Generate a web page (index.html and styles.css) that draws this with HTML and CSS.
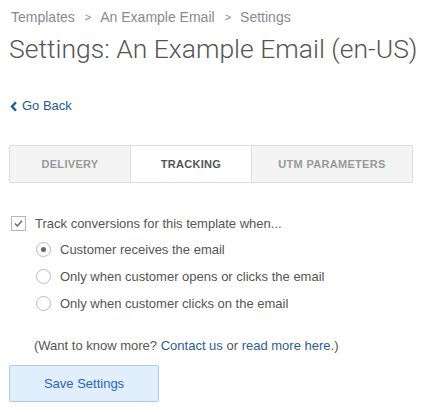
FILE: index.html
```html
<!DOCTYPE html>
<html>
<head>
<meta charset="utf-8">
<link rel="stylesheet" href="styles.css">
</head>
<body>
<div class="page">
  <nav class="crumbs">
    <span>Templates</span><span class="sep">&gt;</span><span>An Example Email</span><span class="sep">&gt;</span><span>Settings</span>
  </nav>
  <h1 class="title">Settings: An Example Email (en-US)</h1>
  <a class="back" href="#"><svg class="chev" width="8" height="11" viewBox="0 0 8 11"><path d="M6 1.2 L2 5.5 L6 9.8" fill="none" stroke="#1f5b8c" stroke-width="2.4"/></svg>Go Back</a>
  <div class="tabs">
    <div class="tab t1">DELIVERY</div>
    <div class="tab t2 active">TRACKING</div>
    <div class="tab t3">UTM PARAMETERS</div>
  </div>
  <div class="check-row">
    <span class="checkbox"><svg width="11" height="11" viewBox="0 0 11 11"><path d="M2 5.6 L4.4 8 L9 2.8" fill="none" stroke="#666" stroke-width="1.4"/></svg></span>
    <span>Track conversions for this template when...</span>
  </div>
  <div class="radios">
    <div class="radio-row"><span class="radio on"></span><span>Customer receives the email</span></div>
    <div class="radio-row"><span class="radio"></span><span>Only when customer opens or clicks the email</span></div>
    <div class="radio-row"><span class="radio"></span><span>Only when customer clicks on the email</span></div>
  </div>
  <p class="info">(Want to know more? <a href="#">Contact us</a> or <a href="#">read more here</a>.)</p>
  <button class="save">Save Settings</button>
</div>
</body>
</html>
```
FILE: styles.css
```css
html, body { margin: 0; padding: 0; background: #fff; }
body { font-family: "Liberation Sans", Arial, sans-serif; color: #555; }
.page { padding: 9px 9px 0 9px; }
.crumbs { font-size: 14px; color: #8a8a8a; line-height: 16px; padding-left: 2px; display: flex; }
.crumbs .sep { font-size: 11px; margin: 0 9px 0 10px; }
.title { font-family: Roboto, "Liberation Sans", sans-serif; font-weight: 300; font-size: 26.5px; color: #555; margin: 8px 0 0 0; line-height: 32px; white-space: nowrap; }
.back { display: inline-flex; align-items: center; gap: 4px; margin-top: 33px; color: #1f5b8c; text-decoration: none; font-size: 13px; line-height: 16px; padding-left: 1px; }
.tabs { display: flex; margin-top: 29px; border: 1px solid #ddd; border-radius: 2px; width: 402px; height: 36px; background: #f4f4f4; }
.tab { display: flex; align-items: center; justify-content: center; font-size: 11px; font-weight: bold; color: #999; letter-spacing: 0.3px; }
.t1 { width: 120px; border-right: 1px solid #ddd; }
.t2 { width: 120px; border-right: 1px solid #ddd; }
.t3 { flex: 1; }
.tab.active { background: #fff; color: #555; }
.check-row { display: flex; align-items: center; margin-top: 33px; font-size: 13px; line-height: 16px; color: #555; padding-left: 2px; }
.checkbox { width: 13px; height: 13px; border: 1px solid #b5b5b5; margin-right: 9px; display: flex; align-items: center; justify-content: center; }
.radios { margin-top: 4px; padding-left: 27px; }
.radio-row { display: flex; align-items: center; height: 27px; font-size: 13px; color: #555; }
.radio { width: 13px; height: 13px; border: 1px solid #bbb; border-radius: 50%; margin-right: 9px; display: flex; align-items: center; justify-content: center; }
.radio.on::after { content: ""; width: 5px; height: 5px; border-radius: 50%; background: #666; }
.info { margin: 21px 0 0 25px; font-size: 13px; line-height: 16px; color: #555; }
.info a { color: #2c5e94; text-decoration: none; }
.save { display: block; margin-top: 11px; width: 150px; height: 37px; background: #e1effd; border: 1px solid #a9cbef; border-radius: 2px; color: #2b63c4; font-family: "Liberation Sans", Arial, sans-serif; font-size: 13px; }
```
